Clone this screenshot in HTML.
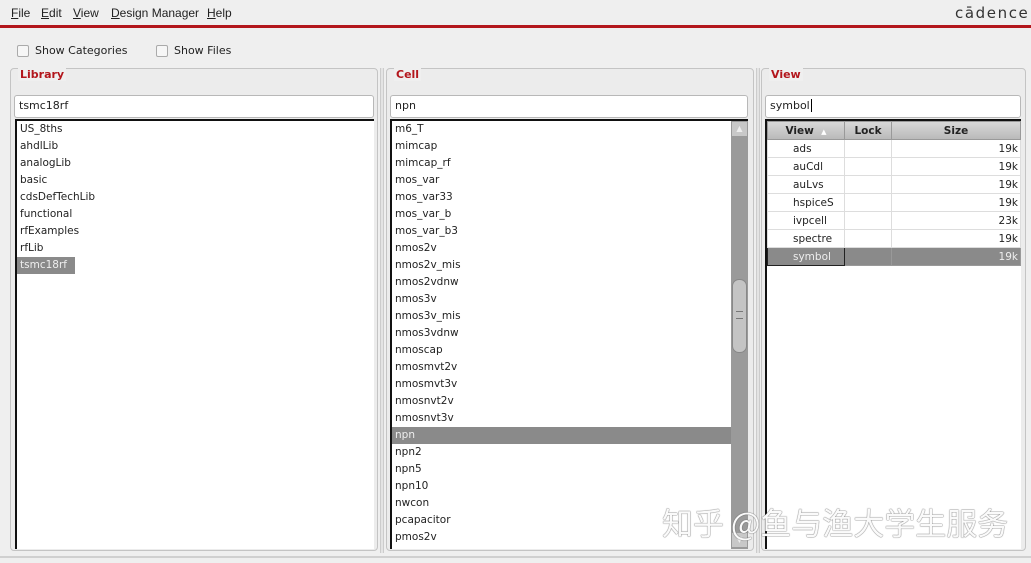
<!DOCTYPE html>
<html><head><meta charset="utf-8"><style>
*{box-sizing:border-box;margin:0;padding:0}
body{width:1031px;height:563px;background:#efefef;font-family:"DejaVu Sans","Liberation Sans",sans-serif;font-size:11px;color:#222;position:relative;overflow:hidden}
.abs{position:absolute}
.menu span{position:absolute;top:6px;font-size:12px;font-family:"Liberation Sans",sans-serif}
.grp{position:absolute;border:1px solid #c4c4c4;border-radius:4px;top:68px;height:483px;background:#ececec}
.title{position:absolute;top:68px;color:#b3161c;font-weight:bold;font-size:11px;background:#efefef;padding:0 2px}
.inp{position:absolute;top:95px;height:23px;background:#fff;border:1px solid #b8b8b8;border-radius:3px;padding:3px 4px;font-size:11px}
.list{position:absolute;top:119px;height:430px;background:#fff;border-top:2px solid #111;border-left:2px solid #111;overflow:hidden}
.list div{height:17px;line-height:17px;padding-left:3px;font-size:10.5px;white-space:nowrap}
.sel{background:#8a8a8a;color:#eee}
.vsep{position:absolute;top:68px;height:485px;width:4px;border-left:1px solid #ccc;border-right:1px solid #ccc;background:#e4e4e4}
table{border-collapse:collapse;font-size:10.5px}
td{height:18px;border:1px solid #ddd}
</style></head><body>
<div class="menu">
<span style="left:11px"><u>F</u>ile</span><span style="left:41px"><u>E</u>dit</span><span style="left:73px"><u>V</u>iew</span><span style="left:111px"><u>D</u>esign Manager</span><span style="left:207px"><u>H</u>elp</span>
<span style="left:955px;top:4px;font-size:15px;letter-spacing:1.6px;color:#333;font-family:'DejaVu Sans',sans-serif">cādence</span>
</div>
<div class="abs" style="left:0;top:25px;width:1031px;height:3px;background:#b3161c"></div>
<div class="abs" style="left:17px;top:45px;width:12px;height:12px;border:1px solid #aaa;border-radius:2px;background:#f6f6f6"></div>
<div class="abs" style="left:35px;top:44px;font-size:11px">Show Categories</div>
<div class="abs" style="left:156px;top:45px;width:12px;height:12px;border:1px solid #aaa;border-radius:2px;background:#f6f6f6"></div>
<div class="abs" style="left:174px;top:44px;font-size:11px">Show Files</div>

<div class="grp" style="left:10px;width:368px"></div>
<div class="grp" style="left:386px;width:368px"></div>
<div class="grp" style="left:761px;width:265px"></div>
<div class="vsep" style="left:380px"></div>
<div class="vsep" style="left:756px"></div>
<div class="title" style="left:18px">Library</div>
<div class="title" style="left:394px">Cell</div>
<div class="title" style="left:769px">View</div>

<div class="inp" style="left:14px;width:360px">tsmc18rf</div>
<div class="inp" style="left:390px;width:358px">npn</div>
<div class="inp" style="left:765px;width:256px">symbol<span style="border-left:1px solid #000;margin-left:1px"></span></div>

<div class="list" style="left:15px;width:359px">
<div>US_8ths</div><div>ahdlLib</div><div>analogLib</div><div>basic</div><div>cdsDefTechLib</div><div>functional</div><div>rfExamples</div><div>rfLib</div><div class="sel" style="width:58px">tsmc18rf</div>
</div>
<div class="list" style="left:390px;width:358px">
<div>m6_T</div><div>mimcap</div><div>mimcap_rf</div><div>mos_var</div><div>mos_var33</div><div>mos_var_b</div><div>mos_var_b3</div><div>nmos2v</div><div>nmos2v_mis</div><div>nmos2vdnw</div><div>nmos3v</div><div>nmos3v_mis</div><div>nmos3vdnw</div><div>nmoscap</div><div>nmosmvt2v</div><div>nmosmvt3v</div><div>nmosnvt2v</div><div>nmosnvt3v</div><div class="sel">npn</div><div>npn2</div><div>npn5</div><div>npn10</div><div>nwcon</div><div>pcapacitor</div><div>pmos2v</div>
</div>
<div class="abs" style="left:731px;top:121px;width:17px;height:428px;background:#9a9a9a"></div>
<div class="abs" style="left:732px;top:122px;width:15px;height:14px;background:#c8c8c8;color:#eee;font-size:8px;text-align:center;line-height:14px">▲</div>
<div class="abs" style="left:732px;top:533px;width:15px;height:14px;background:#c8c8c8;color:#eee;font-size:8px;text-align:center;line-height:14px">▼</div>
<div class="abs" style="left:732px;top:279px;width:15px;height:74px;background:#c4c4c4;border:1px solid #888;border-radius:7px"></div>
<div class="abs" style="left:736px;top:311px;width:7px;height:8px;border-top:1px solid #777;border-bottom:1px solid #777"></div>

<div class="list" style="left:765px;width:256px">
<table style="width:254px">
<tr style="background:linear-gradient(#d8d8d8,#b8b8b8);font-weight:bold"><td style="width:77px;text-align:center;border:1px solid #999">View &nbsp;<span style="font-size:7px;color:#fff">▲</span></td><td style="width:47px;text-align:center;border:1px solid #999">Lock</td><td style="text-align:center;border:1px solid #999">Size</td></tr>
<tr><td style="padding-left:25px">ads</td><td></td><td style="text-align:right;padding-right:2px">19k</td></tr>
<tr><td style="padding-left:25px">auCdl</td><td></td><td style="text-align:right;padding-right:2px">19k</td></tr>
<tr><td style="padding-left:25px">auLvs</td><td></td><td style="text-align:right;padding-right:2px">19k</td></tr>
<tr><td style="padding-left:25px">hspiceS</td><td></td><td style="text-align:right;padding-right:2px">19k</td></tr>
<tr><td style="padding-left:25px">ivpcell</td><td></td><td style="text-align:right;padding-right:2px">23k</td></tr>
<tr><td style="padding-left:25px">spectre</td><td></td><td style="text-align:right;padding-right:2px">19k</td></tr>
<tr style="background:#8a8a8a;color:#eee"><td style="padding-left:25px;border:1px solid #222">symbol</td><td style="border-color:#999"></td><td style="text-align:right;padding-right:2px;border-color:#999">19k</td></tr>
</table>
</div>
<div class="abs" style="left:0;top:556px;width:1031px;height:2px;background:#d0d0d0"></div>
<div class="abs" style="left:662px;top:499px;font-family:'Noto Sans CJK SC',sans-serif;font-size:31px;color:#fafafa;text-shadow:0 0 1px #666,0 0 1px #666;white-space:nowrap">知乎 @鱼与渔大学生服务</div>
</body></html>
